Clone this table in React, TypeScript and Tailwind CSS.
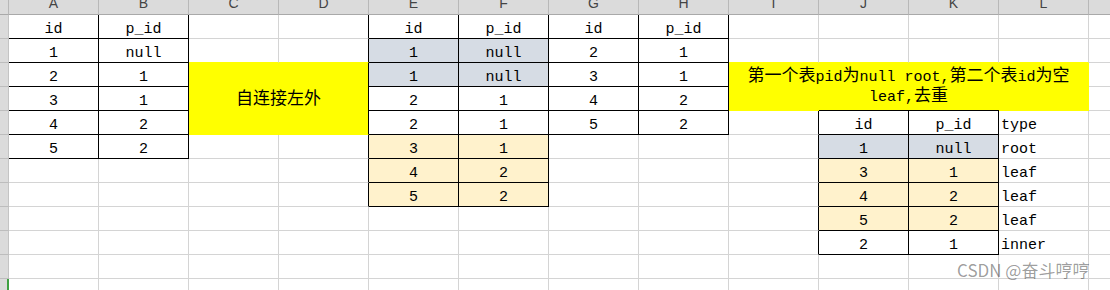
import React from "react";

// Spreadsheet snapshot: four small id / p_id tables, two yellow note blocks.

type Fill = "g" | "p" | "y";
type Cell = { v?: string; fill?: Fill; box?: boolean; left?: boolean; merged?: boolean };

const R = 12;
const C = 13;
const LETTERS = ["A", "B", "C", "D", "E", "F", "G", "H", "I", "J", "K", "L", ""];

const BG: Record<Fill, string> = { g: "bg-[#d6dce4]", p: "bg-[#fff2cc]", y: "bg-[#ffff00]" };
const BR = {
  k: "border-r-black",
  n: "border-r-[#d4d4d4]",
  g: "border-r-[#d6dce4]",
  p: "border-r-[#fff2cc]",
  y: "border-r-[#ffff00]",
};
const BB = {
  k: "border-b-black",
  n: "border-b-[#d4d4d4]",
  g: "border-b-[#d6dce4]",
  p: "border-b-[#fff2cc]",
  y: "border-b-[#ffff00]",
};

const sheet: Cell[][] = Array.from({ length: R }, () => Array.from({ length: C }, () => ({} as Cell)));

function put(r0: number, c0: number, rows: string[][], fills: (Fill | null)[] = []) {
  rows.forEach((row, i) =>
    row.forEach((v, j) => {
      sheet[r0 + i][c0 + j] = { v, box: true, fill: fills[i] ?? undefined };
    })
  );
}

function merge(r0: number, c0: number, h: number, w: number) {
  for (let r = r0; r < r0 + h; r++) for (let c = c0; c < c0 + w; c++) sheet[r][c] = { merged: true, fill: "y" };
}

put(0, 0, [["id", "p_id"], ["1", "null"], ["2", "1"], ["3", "1"], ["4", "2"], ["5", "2"]]);
put(
  0,
  4,
  [["id", "p_id"], ["1", "null"], ["1", "null"], ["2", "1"], ["2", "1"], ["3", "1"], ["4", "2"], ["5", "2"]],
  [null, "g", "g", null, null, "p", "p", "p"]
);
put(0, 6, [["id", "p_id"], ["2", "1"], ["3", "1"], ["4", "2"], ["5", "2"]]);
put(
  4,
  9,
  [["id", "p_id"], ["1", "null"], ["3", "1"], ["4", "2"], ["5", "2"], ["2", "1"]],
  [null, "g", "p", "p", "p", null]
);
["type", "root", "leaf", "leaf", "leaf", "inner"].forEach((v, i) => (sheet[4 + i][11] = { v, left: true }));
merge(2, 2, 3, 2);
merge(2, 8, 2, 4);

const at = (r: number, c: number): Cell | undefined => sheet[r]?.[c];
function edge(a?: Cell, b?: Cell): keyof typeof BR {
  if (a?.box || b?.box) return "k";
  return a?.fill ?? b?.fill ?? "n";
}

// split CJK runs so they get the wider size the sheet font uses
function Txt({ s }: { s: string }) {
  const parts = s.split(/([\u3400-\u9fff]+)/);
  return <>{parts.map((p, i) => (i % 2 ? <span key={i} className="text-[17px]">{p}</span> : p))}</>;
}

export default function App() {
  const cells: React.ReactNode[] = [];

  // header row
  cells.push(<div key="corner" className="bg-[#dbdbdb] border-r border-b border-r-[#b8b8b8] border-b-[#a9a9a9]" />);
  LETTERS.forEach((l, c) =>
    cells.push(
      <div
        key={"h" + c}
        className={`flex items-end justify-center overflow-hidden bg-[#dbdbdb] border-b border-b-[#a9a9a9] ${
          c < C - 1 ? "border-r border-r-[#b8b8b8]" : ""
        }`}
      >
        <span className="mb-[4px] text-[14px] leading-none text-[#444] font-['Liberation_Sans',sans-serif]">{l}</span>
      </div>
    )
  );

  for (let r = 0; r < R; r++) {
    const last = r === R - 1;
    cells.push(
      <div
        key={"rh" + r}
        className={`bg-[#dbdbdb] ${
          last ? "border-r-2 border-r-[#3fa142]" : "border-r border-b border-r-[#c4c4c4] border-b-[#bdbdbd]"
        }`}
      />
    );
    for (let c = 0; c < C; c++) {
      const cell = sheet[r][c];
      if (cell.merged) continue;
      const right = c < C - 1 ? `border-r ${BR[edge(cell, at(r, c + 1))]}` : "";
      const bottom = !last ? `border-b ${BB[edge(cell, at(r + 1, c))]}` : "";
      const topLine = cell.box && at(r - 1, c)?.merged ? "shadow-[0_-1px_0_#000]" : "";
      cells.push(
        <div
          key={r + "-" + c}
          className={`flex items-end leading-[17px] ${cell.left ? "justify-start pl-[2px]" : "justify-center"} ${
            cell.fill ? BG[cell.fill] : "bg-white"
          } ${right} ${bottom} ${topLine}`}
        >
          {cell.v}
        </div>
      );
    }
  }

  return (
    <div className="relative w-[1110px] h-[290px] overflow-hidden bg-white text-[15px] text-black font-['Liberation_Mono','Noto_Sans_CJK_SC',monospace]">
      <div className="grid grid-cols-[9px_repeat(12,90px)_21px] grid-rows-[15px_repeat(11,24px)_11px]">
        <div className="col-start-4 col-span-2 row-start-4 row-span-3 flex items-center justify-center pt-[2px] leading-[19px] bg-[#ffff00] border-r border-b border-r-black border-b-[#ffff00]">
          <Txt s="自连接左外" />
        </div>
        <div className="col-start-10 col-span-4 row-start-4 row-span-2 flex flex-col items-center justify-center text-center leading-[19px] bg-[#ffff00] border-r border-b border-r-[#ffff00] border-b-[#ffff00]">
          <div>
            <Txt s="第一个表pid为null root,第二个表id为空" />
          </div>
          <div>
            <Txt s="leaf,去重" />
          </div>
        </div>
        {cells}
      </div>
      <div className="absolute left-[957px] top-[261px] text-[17px] leading-none text-black/40 font-['Noto_Sans_CJK_SC',sans-serif]">
        CSDN @奋斗哼哼
      </div>
    </div>
  );
}
